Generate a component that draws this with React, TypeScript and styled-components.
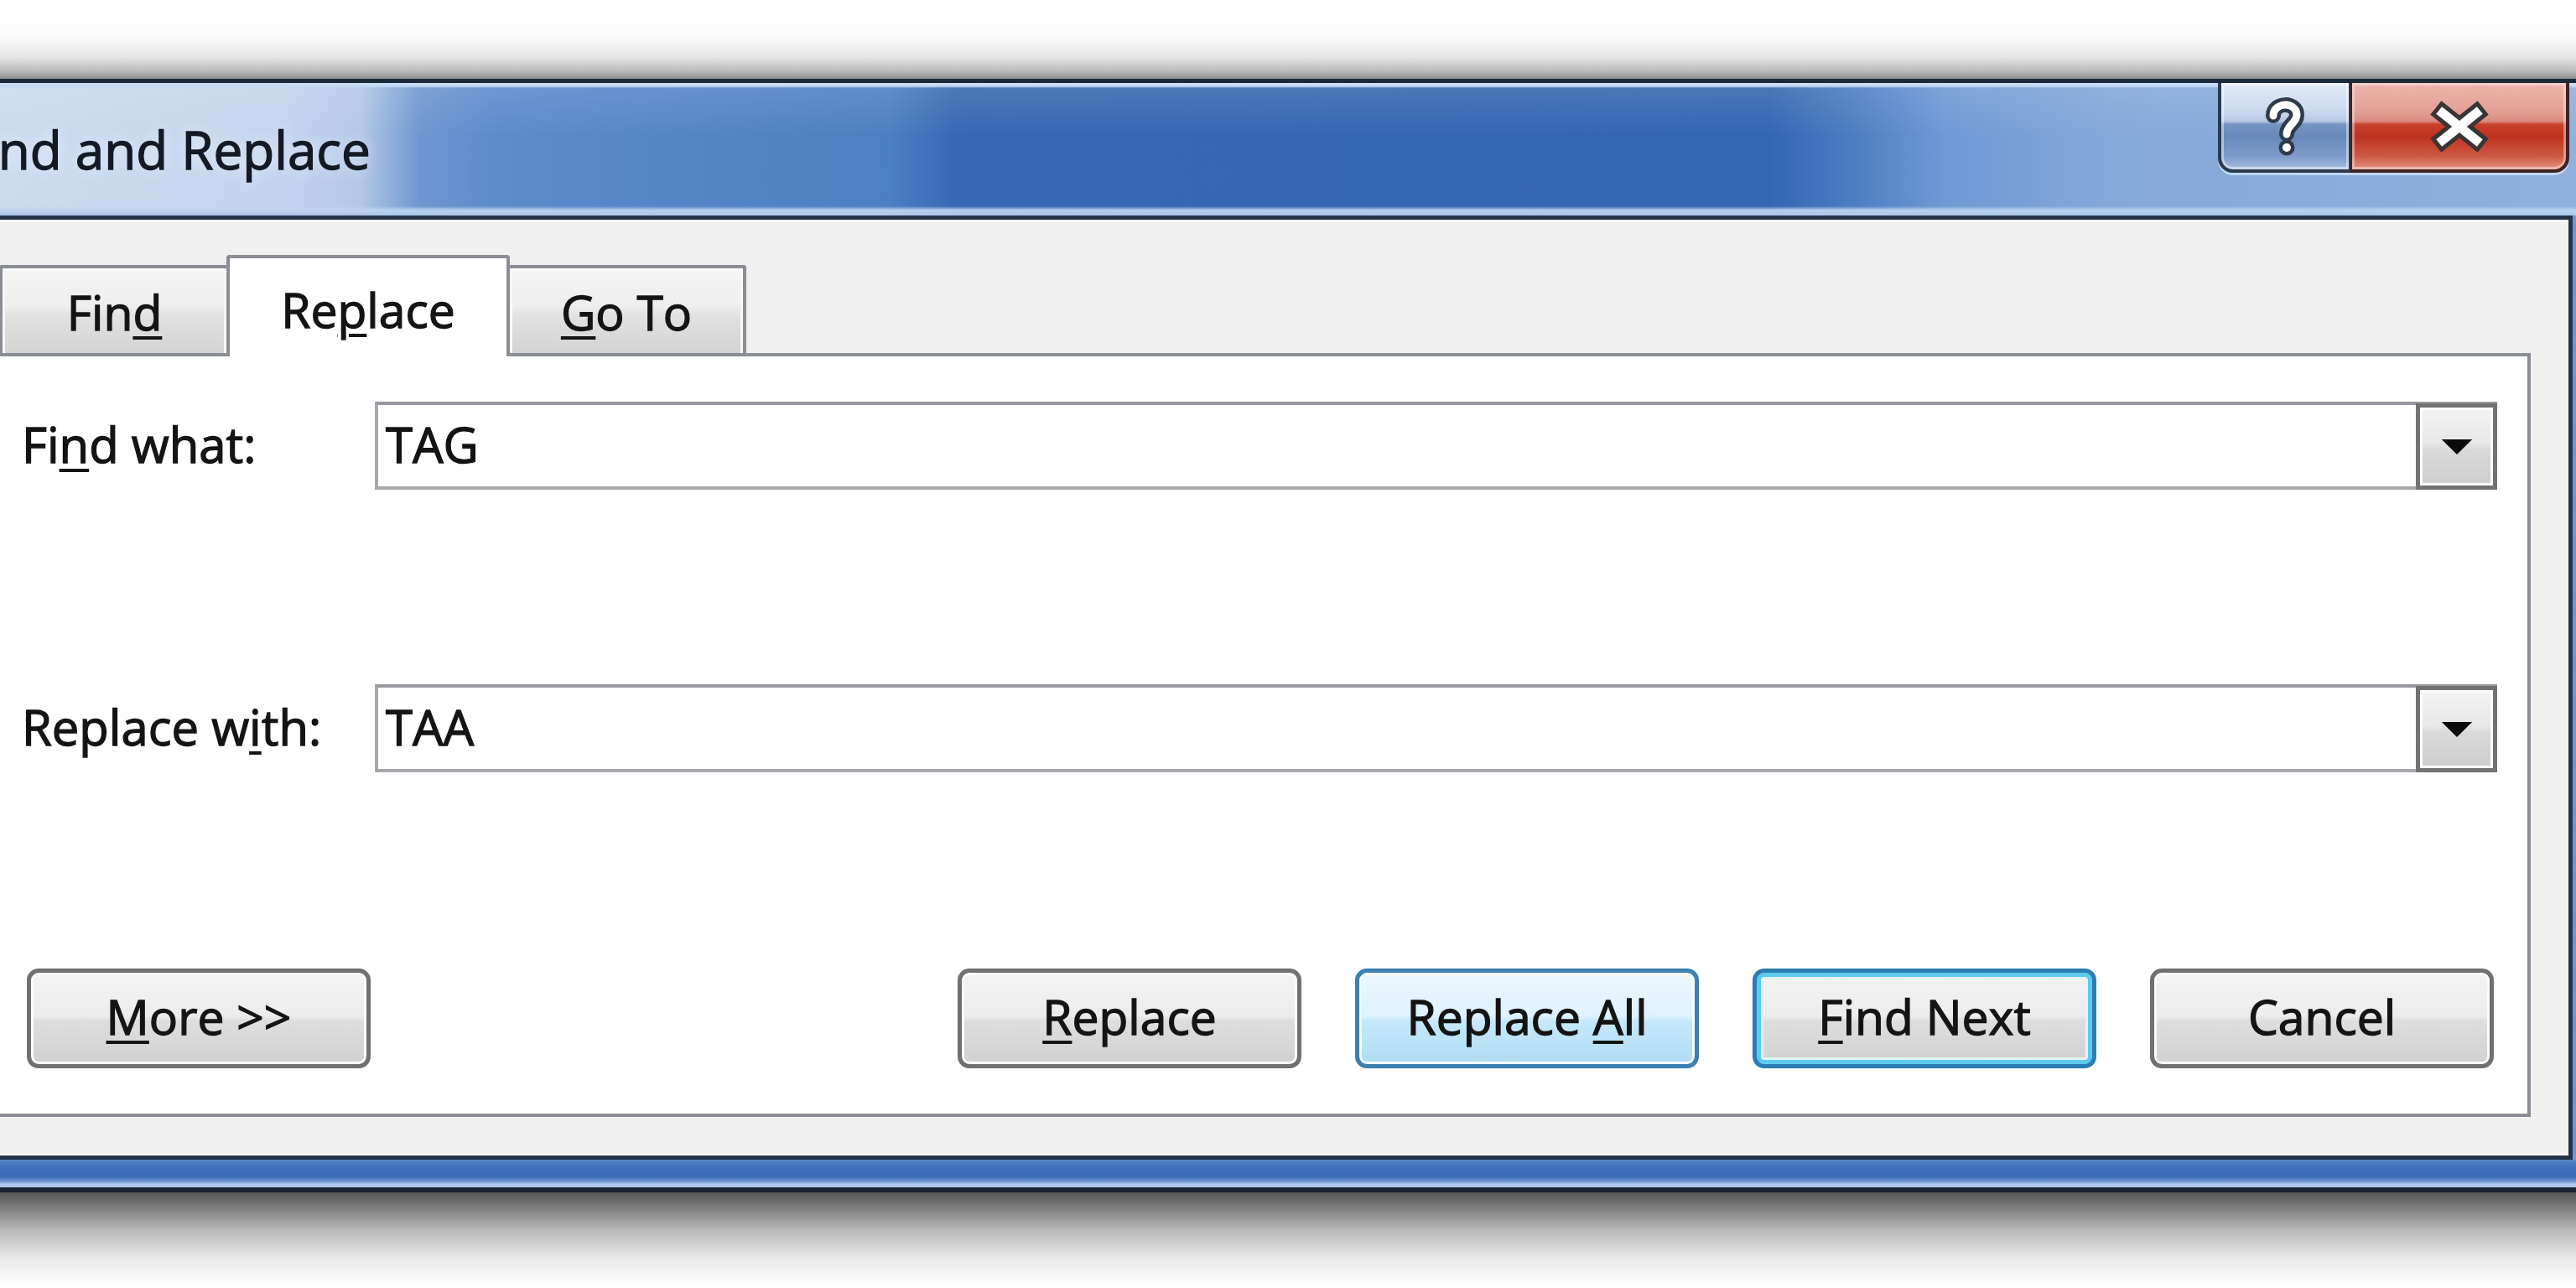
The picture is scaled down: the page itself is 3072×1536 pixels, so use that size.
import React from 'react';
import styled, { createGlobalStyle, css } from 'styled-components';

const FONT = `"Open Sans", "Noto Sans", "Liberation Sans", sans-serif`;

const GlobalStyle = createGlobalStyle`
  html, body { margin: 0; padding: 0; background: #ffffff; overflow: hidden; }
  #root { width: 3072px; height: 1536px; }
  * { box-sizing: border-box; }
`;

const Page = styled.div`
  width: 3072px;
  height: 1536px;
  overflow: hidden;
  display: flex;
  flex-direction: column;
  background: #ffffff;
  font-family: ${FONT};
  color: #141414;
  -webkit-text-stroke-width: 1.3px;
`;

const TopShade = styled.div`
  flex: none;
  height: 94px;
  background: linear-gradient(180deg, #ffffff 0px, #fcfcfc 42px, #e6e6e6 68px, #bcbcbc 84px, #8e8e8e 94px);
`;

const BottomShade = styled.div`
  flex: 1;
  background: linear-gradient(180deg, #555555 0px, #7d7d7d 18px, #b9b9b9 45px, #e4e4e4 75px, #f8f8f8 100px, #fdfdfd 100%);
`;

const Window = styled.div`
  flex: none;
  width: 3140px;
  margin-left: -60px;
  display: flex;
  flex-direction: column;
  border-top: 5px solid #1c2939;
  border-bottom: 6px solid #1a2332;
  background: linear-gradient(90deg, #4d7fc3, #3b6cb5 50%, #6f98d2);
`;

const TitleBar = styled.div`
  height: 158px;
  display: flex;
  align-items: center;
  padding-left: 10px;
  background:
    linear-gradient(180deg, #cfe0f5 0px, #c2d7f1 4px, rgba(255,255,255,0.10) 6px, rgba(255,255,255,0) 40%, rgba(0,0,0,0) 93%, rgba(190,212,240,0.95) 96%, #abc5e8 100%),
    linear-gradient(90deg, #cddcf0 0px, #c2d4ed 400px, #b2c8e7 490px, #6f97cf 560px, #5d8cca 650px, #5787c8 800px, #4d7fc4 1120px, #3868b3 1200px, #3466b2 2170px, #4a7bc0 2260px, #6f9ad3 2380px, #85a8da 2580px, #90b1de 3140px);
`;

const Title = styled.div`
  font-size: 62px;
  line-height: 1;
  color: #141a24;
  text-shadow: 0 0 18px rgba(255, 255, 255, 0.75);
  white-space: nowrap;
`;

const CaptionGroup = styled.div`
  align-self: flex-start;
  margin-left: auto;
  margin-right: 16px;
  height: 107px;
  display: flex;
  border-radius: 0 0 18px 18px;
  box-shadow: 0 3px 0 rgba(214, 229, 248, 0.75);
`;

const CaptionButton = styled.div<{ $kind: 'help' | 'close' }>`
  height: 100%;
  display: flex;
  align-items: center;
  justify-content: center;
  border-bottom: 4px solid #2b3a4f;
  ${(p) =>
    p.$kind === 'help'
      ? css`
          width: 158px;
          border-left: 4px solid #2b3a4f;
          border-right: 2px solid #2b3a4f;
          border-bottom-left-radius: 18px;
          background: linear-gradient(180deg, #e2ebf7 0%, #cddbee 30%, #b7c9e3 44%, #7594c2 48%, #6989ba 62%, #7e9ccb 85%, #a5bddf 100%);
          box-shadow: inset 0 0 0 3px rgba(255, 255, 255, 0.45);
        `
      : css`
          width: 261px;
          border-right: 4px solid #3d2422;
          border-left: 2px solid #3d2422;
          border-bottom-color: #3d2422;
          border-bottom-right-radius: 18px;
          background: linear-gradient(180deg, #ecb6ae 0%, #e5a298 30%, #da8d81 44%, #c8412c 48%, #be3220 62%, #cd5a43 85%, #e39484 100%);
          box-shadow: inset 0 0 0 3px rgba(255, 235, 230, 0.45);
        `}
`;

const Client = styled.div`
  margin: 0 12px 0 30px;
  border: 5px solid #24334a;
  background: #f0f0f0;
  box-shadow: inset 0 3px 0 #fbfbfb, inset 0 -3px 0 #f9f9f9;
  padding: 42px 45px 46px 13px;
  display: flex;
  flex-direction: column;
`;

const FrameBottom = styled.div`
  height: 33px;
  background: linear-gradient(180deg, #5a87c6 0px, #3f70b9 8px, #3a6bb5 20px, #6f97d1 26px, #b2cbed 29px, #a9c3e8 33px);
`;

const TabStrip = styled.div`
  position: relative;
  z-index: 1;
  display: flex;
  align-items: flex-end;
  padding-left: 11px;
  margin-bottom: -4px;
  height: 121px;
`;

const Tab = styled.div<{ $active?: boolean; $width: number; $overlap?: boolean }>`
  width: ${(p) => p.$width}px;
  margin-left: ${(p) => (p.$overlap ? -4 : 0)}px;
  display: flex;
  align-items: center;
  justify-content: center;
  font-size: 57px;
  line-height: 1;
  border: 4px solid #8a8d94;
  border-bottom: none;
  border-radius: 4px 4px 0 0;
  ${(p) =>
    p.$active
      ? css`
          position: relative;
          z-index: 2;
          height: 121px;
          padding-top: 6px;
          background: #ffffff;
        `
      : css`
          height: 105px;
          margin-bottom: 4px;
          padding-top: 4px;
          background: linear-gradient(180deg, #f4f4f4 0%, #eeeeee 45%, #e2e2e2 55%, #d3d3d3 100%);
          box-shadow: inset 0 3px 0 #fbfbfb, inset 3px 0 0 #f7f7f7, inset -3px 0 0 #f7f7f7;
        `}
`;

const Panel = styled.div`
  height: 911px;
  border: 4px solid #8a8d94;
  background: #ffffff;
  padding: 54px 36px 54px 34px;
  display: flex;
  flex-direction: column;
`;

const FieldRow = styled.div<{ $gap: number }>`
  display: grid;
  grid-template-columns: 421px 1fr;
  align-items: center;
  height: 105px;
  margin-bottom: ${(p) => p.$gap}px;
`;

const Label = styled.label`
  font-size: 58px;
  line-height: 1;
  white-space: nowrap;
  padding-bottom: 4px;
`;

const Combo = styled.div`
  height: 105px;
  display: flex;
  border: 4px solid #a6a8ad;
  border-top-color: #979aa0;
  background: #ffffff;
`;

const Field = styled.div`
  flex: 1;
  display: flex;
  align-items: center;
  padding: 0 0 4px 9px;
  font-size: 58px;
  line-height: 1;
`;

const DropButton = styled.div`
  width: 97px;
  margin: -2px -4px -4px 0;
  display: flex;
  align-items: center;
  justify-content: center;
  border: 5px solid #727272;
  background: linear-gradient(180deg, #f3f3f3 0%, #e8e8e8 45%, #d9d9d9 55%, #cecece 100%);
  box-shadow: inset 0 0 0 3px #fbfbfb;
`;

const ButtonRow = styled.div`
  display: flex;
  align-items: center;
  gap: 64px;
  padding-left: 6px;
  padding-right: 4px;
`;

const Spacer = styled.div`
  flex: 1;
`;

const Button = styled.button<{ $variant?: 'normal' | 'hot' | 'default' }>`
  width: 410px;
  height: 119px;
  margin: 0;
  padding: 0 0 4px;
  border-radius: 14px;
  font-family: ${FONT};
  font-size: 57px;
  line-height: 1;
  color: #141414;
  -webkit-text-stroke-width: 1.3px;
  border: 5px solid #707070;
  background: linear-gradient(180deg, #f4f4f4 0%, #ececec 47%, #dedede 53%, #d0d0d0 100%);
  box-shadow: inset 0 0 0 3px #fbfbfb;
  ${(p) =>
    p.$variant === 'hot' &&
    css`
      border-color: #3c7fb1;
      background: linear-gradient(180deg, #ecf7fd 0%, #dff2fc 47%, #c6e8fa 53%, #aedcf4 100%);
      box-shadow: inset 0 0 0 3px #f4fbfe;
    `}
  ${(p) =>
    p.$variant === 'default' &&
    css`
      border-color: #2b7db2;
      box-shadow: inset 0 0 0 5px #5ccbee, inset 0 0 0 8px #e2f5fc;
    `}
`;

const Key = styled.u`
  text-decoration-thickness: 4px;
  text-underline-offset: 7px;
`;

function HelpGlyph() {
  const d = 'M-14 -13 C-14 -30 14 -30 14 -14 C14 -4 2 -2 2 9';
  return (
    <svg width="60" height="80" viewBox="-30 -40 60 80">
      <path d={d} fill="none" stroke="#2f3b4b" strokeWidth="18" strokeLinecap="round" />
      <circle cx="2" cy="25" r="9.5" fill="#2f3b4b" />
      <path d={d} fill="none" stroke="#ffffff" strokeWidth="9" strokeLinecap="round" />
      <circle cx="2" cy="25" r="5" fill="#ffffff" />
    </svg>
  );
}

function CloseGlyph() {
  return (
    <svg width="80" height="70" viewBox="-40 -35 80 70">
      <g stroke="#3a3434" strokeWidth="21" strokeLinecap="square">
        <line x1="-20" y1="-16" x2="20" y2="16" />
        <line x1="20" y1="-16" x2="-20" y2="16" />
      </g>
      <g stroke="#ffffff" strokeWidth="11" strokeLinecap="square">
        <line x1="-20" y1="-16" x2="20" y2="16" />
        <line x1="20" y1="-16" x2="-20" y2="16" />
      </g>
    </svg>
  );
}

function Arrow() {
  return (
    <svg width="40" height="22" viewBox="0 0 44 24">
      <path d="M2 2 L42 2 L22 22 Z" fill="#0a0a0a" />
    </svg>
  );
}

export default function App() {
  return (
    <Page>
      <GlobalStyle />
      <TopShade />
      <Window>
        <TitleBar>
          <Title>Find and Replace</Title>
          <CaptionGroup>
            <CaptionButton $kind="help">
              <HelpGlyph />
            </CaptionButton>
            <CaptionButton $kind="close">
              <CloseGlyph />
            </CaptionButton>
          </CaptionGroup>
        </TitleBar>
        <Client>
          <TabStrip>
            <Tab $width={275}>
              Fin<Key>d</Key>
            </Tab>
            <Tab $width={338} $active $overlap>
              Re<Key>p</Key>lace
            </Tab>
            <Tab $width={286} $overlap>
              <Key>G</Key>o To
            </Tab>
          </TabStrip>
          <Panel>
            <FieldRow $gap={232}>
              <Label>
                Fi<Key>n</Key>d what:
              </Label>
              <Combo>
                <Field>TAG</Field>
                <DropButton>
                  <Arrow />
                </DropButton>
              </Combo>
            </FieldRow>
            <FieldRow $gap={234}>
              <Label>
                Replace w<Key>i</Key>th:
              </Label>
              <Combo>
                <Field>TAA</Field>
                <DropButton>
                  <Arrow />
                </DropButton>
              </Combo>
            </FieldRow>
            <ButtonRow>
              <Button>
                <Key>M</Key>ore &gt;&gt;
              </Button>
              <Spacer />
              <Button>
                <Key>R</Key>eplace
              </Button>
              <Button $variant="hot">
                Replace <Key>A</Key>ll
              </Button>
              <Button $variant="default">
                <Key>F</Key>ind Next
              </Button>
              <Button>Cancel</Button>
            </ButtonRow>
          </Panel>
        </Client>
        <FrameBottom />
      </Window>
      <BottomShade />
    </Page>
  );
}
